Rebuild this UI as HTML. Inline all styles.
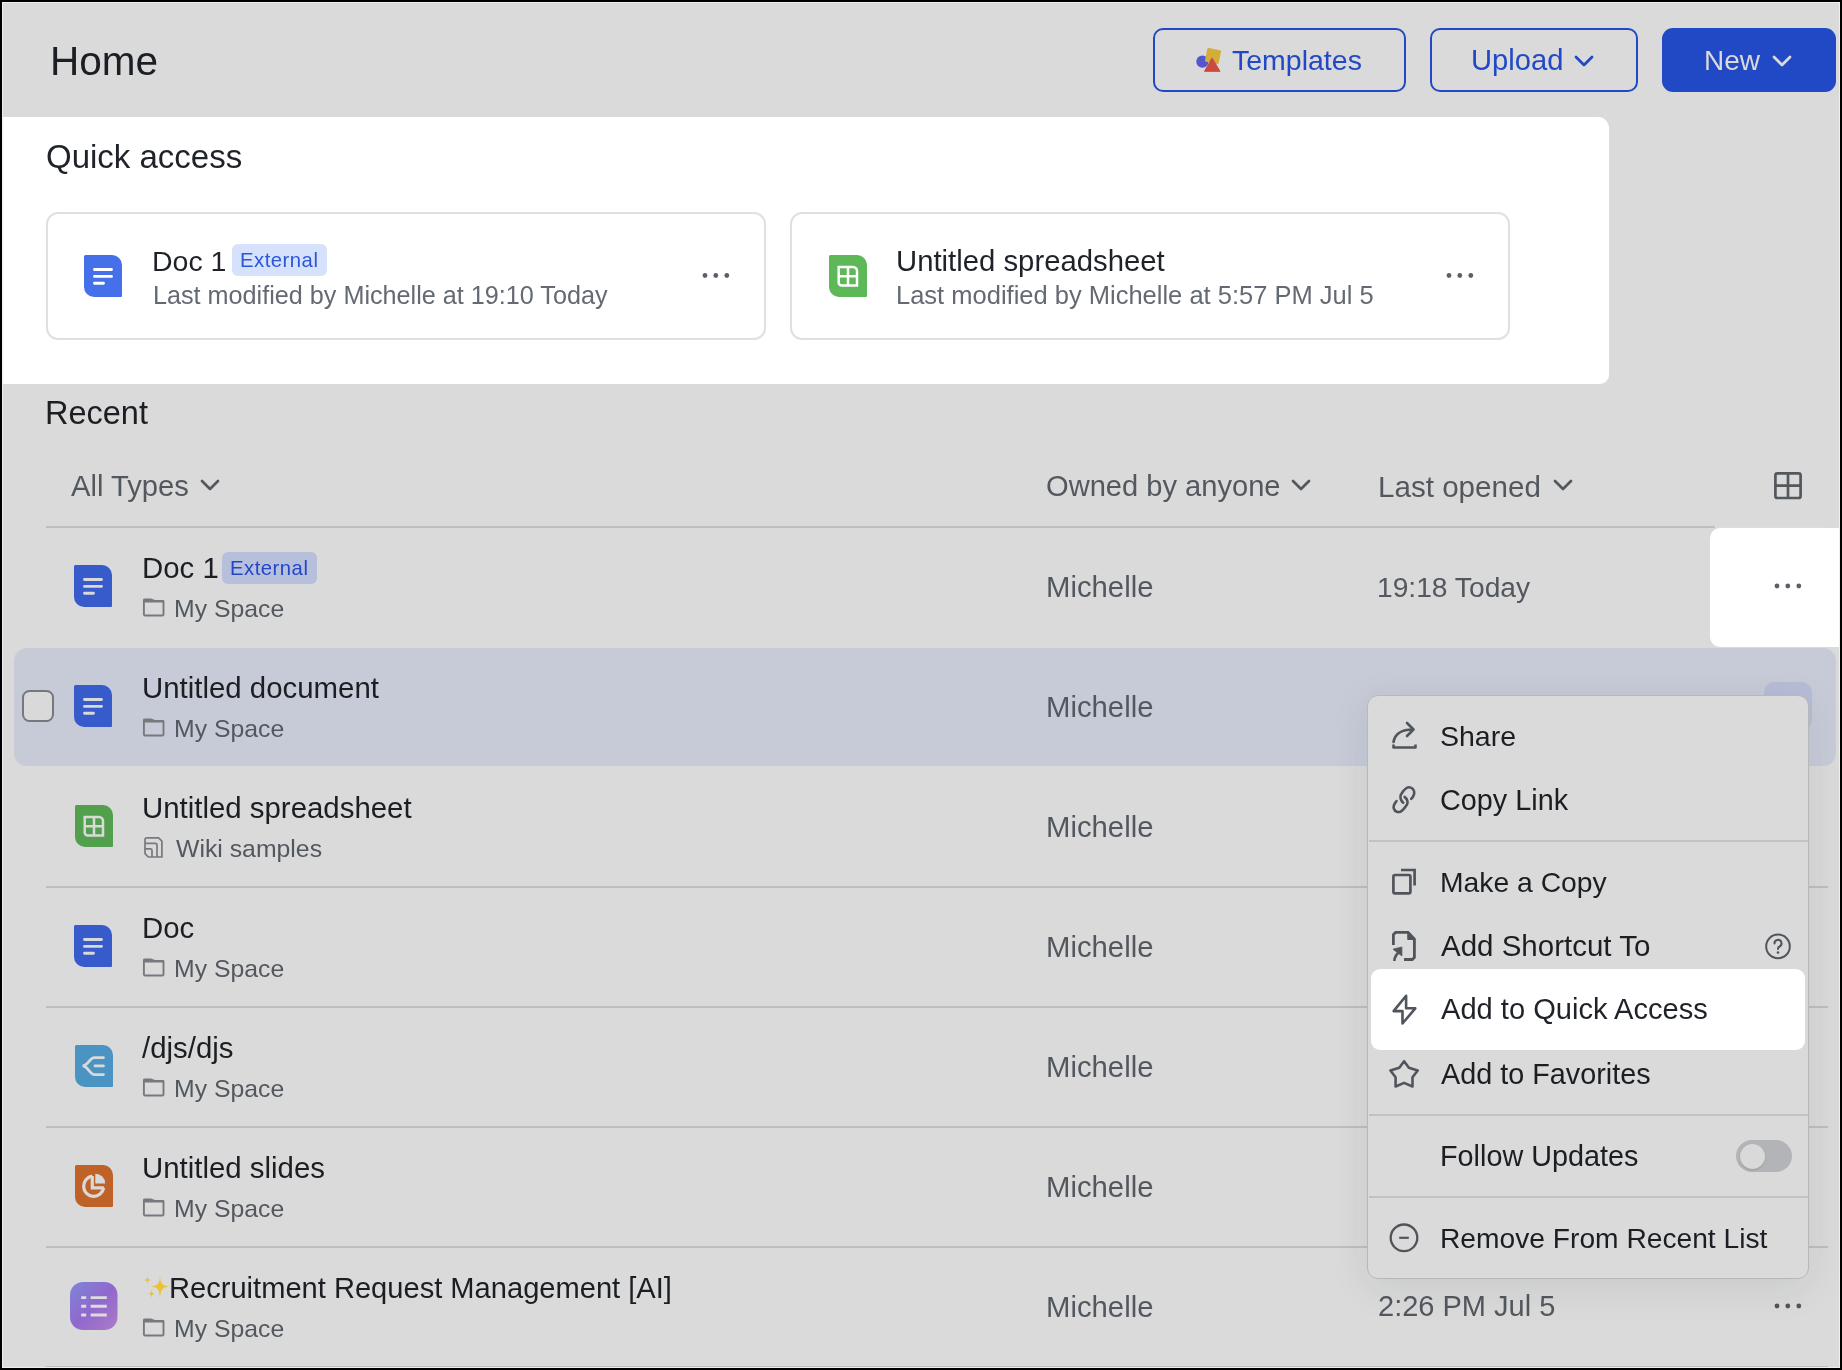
<!DOCTYPE html>
<html><head><meta charset="utf-8">
<style>
*{box-sizing:border-box;margin:0;padding:0}
html,body{width:1842px;height:1370px;overflow:hidden}
body{background:#dadada;font-family:"Liberation Sans",sans-serif;position:relative}
.a{position:absolute;white-space:nowrap;line-height:1;will-change:transform}
.box{position:absolute}
svg{overflow:visible}
</style></head><body>
<div class="a" style="left:49.98px;top:40.91px;font-size:40.5px;color:#1b1e22;">Home</div>
<div class="box" style="left:1153px;top:28px;width:253px;height:64px;border:2px solid #2249c5;border-radius:10px"></div>
<div class="box" style="left:1430px;top:28px;width:208px;height:64px;border:2px solid #2249c5;border-radius:10px"></div>
<div class="box" style="left:1662px;top:28px;width:174px;height:64px;background:#2249c5;border-radius:11px"></div>
<svg class="a" style="left:1190px;top:44px" width="36" height="32" viewBox="0 0 36 32">
<circle cx="12.4" cy="17.6" r="6.1" fill="#5256d0"/>
<rect x="16" y="5" width="14" height="14" rx="1.5" fill="#d4ac38" transform="rotate(12 23 12)"/>
<path d="M22 14 L30 27.3 H14.5 Z" fill="#c94a3f" stroke="#c94a3f" stroke-width="1" stroke-linejoin="round"/>
</svg>
<div class="a" style="left:1232.36px;top:46.07px;font-size:28.5px;color:#2249c5;">Templates</div>
<div class="a" style="left:1470.95px;top:45.68px;font-size:29.2px;color:#2249c5;">Upload</div>
<svg class="a" style="left:1570px;top:50px" width="28" height="22"><polyline points="6,7 14,15 22,7" fill="none" stroke="#2249c5" stroke-width="2.8" stroke-linecap="round" stroke-linejoin="round"/></svg>
<div class="a" style="left:1703.60px;top:46.59px;font-size:28px;color:#dadada;">New</div>
<svg class="a" style="left:1768px;top:50px" width="28" height="22"><polyline points="6,7 14,15 22,7" fill="none" stroke="#dadada" stroke-width="2.8" stroke-linecap="round" stroke-linejoin="round"/></svg>
<div class="box" style="left:0;top:117px;width:1609px;height:267px;background:#fff;border-radius:0 11px 9px 0"></div>
<div class="a" style="left:45.74px;top:139.86px;font-size:33px;color:#1f2329;">Quick access</div>
<div class="box" style="left:46px;top:212px;width:720px;height:128px;border:2px solid #dee0e3;border-radius:12px"></div>
<div class="box" style="left:790px;top:212px;width:720px;height:128px;border:2px solid #dee0e3;border-radius:12px"></div>
<svg class="a" style="left:84.3px;top:254.8px" width="38" height="42" viewBox="0 0 38 42">
<path d="M1.5 0 H28 A10 10 0 0 1 38 10 V41 A1 1 0 0 1 37 42 H10 A10 10 0 0 1 0 32 V1.5 A1.5 1.5 0 0 1 1.5 0 Z" fill="#4570ea"/>
<path d="M10.5 14.5 H27.5 M10.5 21.4 H27.5 M10.5 28.3 H19.5" stroke="#ffffff" stroke-width="2.9" stroke-linecap="round" fill="none"/>
</svg>
<div class="a" style="left:152.26px;top:246.57px;font-size:28.5px;color:#1f2329;">Doc 1</div>
<div class="box" style="left:232px;top:244.3px;width:95px;height:31.6px;background:#d6e1fb;border-radius:6px"></div>
<div class="a" style="left:239.93px;top:249.71px;font-size:20.3px;color:#2b56d8;letter-spacing:0.5px">External</div>
<div class="a" style="left:152.53px;top:282.76px;font-size:25.2px;color:#646a73;">Last modified by Michelle at 19:10 Today</div>
<svg class="a" style="left:698px;top:268px" width="36" height="14"><circle cx="7" cy="7.5" r="2.4" fill="#5b6068"/><circle cx="17.8" cy="7.5" r="2.4" fill="#5b6068"/><circle cx="28.8" cy="7.5" r="2.4" fill="#5b6068"/></svg>
<svg class="a" style="left:829.1px;top:254.9px" width="38" height="42" viewBox="0 0 38 42">
<path d="M1.5 0 H28 A10 10 0 0 1 38 10 V41 A1 1 0 0 1 37 42 H10 A10 10 0 0 1 0 32 V1.5 A1.5 1.5 0 0 1 1.5 0 Z" fill="#5db858"/>
<path d="M9.7 12 H24 A4 4 0 0 1 28 16 V30.4 H12.7 A3 3 0 0 1 9.7 27.4 Z M19 12 V30.4 M9.7 21.3 H28" stroke="#ffffff" stroke-width="2.5" fill="none"/>
</svg>
<div class="a" style="left:895.74px;top:246.09px;font-size:29.3px;color:#1f2329;">Untitled spreadsheet</div>
<div class="a" style="left:895.91px;top:282.51px;font-size:25.5px;color:#646a73;">Last modified by Michelle at 5:57 PM Jul 5</div>
<svg class="a" style="left:1442px;top:268px" width="36" height="14"><circle cx="7" cy="7.5" r="2.4" fill="#5b6068"/><circle cx="17.8" cy="7.5" r="2.4" fill="#5b6068"/><circle cx="28.8" cy="7.5" r="2.4" fill="#5b6068"/></svg>
<div class="a" style="left:44.63px;top:396.68px;font-size:32.5px;color:#1b1e22;">Recent</div>
<div class="a" style="left:70.94px;top:472.28px;font-size:29.2px;color:#53585f;">All Types</div>
<svg class="a" style="left:199px;top:478px" width="24" height="16"><polyline points="3,3 11,11 19,3" fill="none" stroke="#53585f" stroke-width="2.7" stroke-linecap="round" stroke-linejoin="round"/></svg>
<div class="a" style="left:1046.22px;top:472.16px;font-size:29.1px;color:#53585f;">Owned by anyone</div>
<svg class="a" style="left:1290px;top:478px" width="24" height="16"><polyline points="3,3 11,11 19,3" fill="none" stroke="#53585f" stroke-width="2.7" stroke-linecap="round" stroke-linejoin="round"/></svg>
<div class="a" style="left:1377.97px;top:471.74px;font-size:29.6px;color:#53585f;">Last opened</div>
<svg class="a" style="left:1551.5px;top:478px" width="24" height="16"><polyline points="3,3 11,11 19,3" fill="none" stroke="#53585f" stroke-width="2.7" stroke-linecap="round" stroke-linejoin="round"/></svg>
<svg class="a" style="left:1772px;top:469.5px" width="32" height="32" viewBox="0 0 32 32"><rect x="3.4" y="3.4" width="25.2" height="24.6" rx="2" fill="none" stroke="#53585f" stroke-width="2.7"/><path d="M16 3.5 V28 M3.5 15.7 H28.5" stroke="#53585f" stroke-width="2.7"/></svg>
<div class="box" style="left:46px;top:526px;width:1782px;height:1.5px;background:#bebebe"></div>
<div class="box" style="left:46px;top:886px;width:1782px;height:1.5px;background:#bebebe"></div>
<div class="box" style="left:46px;top:1006px;width:1782px;height:1.5px;background:#bebebe"></div>
<div class="box" style="left:46px;top:1126px;width:1782px;height:1.5px;background:#bebebe"></div>
<div class="box" style="left:46px;top:1246px;width:1782px;height:1.5px;background:#bebebe"></div>
<div class="box" style="left:46px;top:1366px;width:1782px;height:1.5px;background:#bebebe"></div>
<div class="box" style="left:1715px;top:525.5px;width:113px;height:2.5px;background:#dcdcdc"></div>
<div class="box" style="left:1710px;top:528px;width:140px;height:119px;background:#fff;border-radius:10px 0 0 10px"></div>
<div class="box" style="left:14px;top:647.5px;width:1822px;height:118.5px;background:#c7cbd8;border-radius:13px"></div>
<div class="box" style="left:1764px;top:682px;width:48px;height:48px;background:#b7bdd6;border-radius:10px"></div>
<div class="box" style="left:22.3px;top:690px;width:31.3px;height:31.7px;border:2.2px solid #75787d;background:#d9d9d9;border-radius:7.5px"></div>
<svg class="a" style="left:74.4px;top:565px" width="38" height="42" viewBox="0 0 38 42">
<path d="M1.5 0 H28 A10 10 0 0 1 38 10 V41 A1 1 0 0 1 37 42 H10 A10 10 0 0 1 0 32 V1.5 A1.5 1.5 0 0 1 1.5 0 Z" fill="#385bcc"/>
<path d="M10.5 14.5 H27.5 M10.5 21.4 H27.5 M10.5 28.3 H19.5" stroke="#d9d9d9" stroke-width="2.9" stroke-linecap="round" fill="none"/>
</svg>
<div class="a" style="left:142.09px;top:553.31px;font-size:29.4px;color:#1b1e22;">Doc 1</div>
<div class="box" style="left:221.9px;top:552.2px;width:95px;height:31.9px;background:#b6c0dc;border-radius:6px"></div>
<div class="a" style="left:230.13px;top:557.81px;font-size:20.3px;color:#2346c8;letter-spacing:0.5px">External</div>
<svg class="a" style="left:143.3px;top:598.1px" width="22" height="19" viewBox="0 0 22 19"><path d="M0.9 4 V16.4 A1.1 1.1 0 0 0 2 17.5 H19.4 A1.1 1.1 0 0 0 20.5 16.4 V4" fill="none" stroke="#77797e" stroke-width="1.9"/><path d="M0 4.4 V1.8 A1.5 1.5 0 0 1 1.5 0.4 H8 L12 2 H20 A1.4 1.4 0 0 1 21.4 3.4 V4.4 Z" fill="#77797e"/></svg>
<div class="a" style="left:173.97px;top:596.60px;font-size:24.8px;color:#53585f;">My Space</div>
<div class="a" style="left:1045.90px;top:571.79px;font-size:29.3px;color:#53585f;">Michelle</div>
<div class="a" style="left:1377.45px;top:572.72px;font-size:28.2px;color:#53585f;">19:18 Today</div>
<svg class="a" style="left:74.4px;top:685px" width="38" height="42" viewBox="0 0 38 42">
<path d="M1.5 0 H28 A10 10 0 0 1 38 10 V41 A1 1 0 0 1 37 42 H10 A10 10 0 0 1 0 32 V1.5 A1.5 1.5 0 0 1 1.5 0 Z" fill="#385bcc"/>
<path d="M10.5 14.5 H27.5 M10.5 21.4 H27.5 M10.5 28.3 H19.5" stroke="#d9d9d9" stroke-width="2.9" stroke-linecap="round" fill="none"/>
</svg>
<div class="a" style="left:142.23px;top:673.31px;font-size:29.4px;color:#1b1e22;">Untitled document</div>
<svg class="a" style="left:143.3px;top:718.1px" width="22" height="19" viewBox="0 0 22 19"><path d="M0.9 4 V16.4 A1.1 1.1 0 0 0 2 17.5 H19.4 A1.1 1.1 0 0 0 20.5 16.4 V4" fill="none" stroke="#77797e" stroke-width="1.9"/><path d="M0 4.4 V1.8 A1.5 1.5 0 0 1 1.5 0.4 H8 L12 2 H20 A1.4 1.4 0 0 1 21.4 3.4 V4.4 Z" fill="#77797e"/></svg>
<div class="a" style="left:173.97px;top:716.60px;font-size:24.8px;color:#53585f;">My Space</div>
<div class="a" style="left:1045.90px;top:691.79px;font-size:29.3px;color:#53585f;">Michelle</div>
<svg class="a" style="left:75.2px;top:805px" width="38" height="42" viewBox="0 0 38 42">
<path d="M1.5 0 H28 A10 10 0 0 1 38 10 V41 A1 1 0 0 1 37 42 H10 A10 10 0 0 1 0 32 V1.5 A1.5 1.5 0 0 1 1.5 0 Z" fill="#52a04d"/>
<path d="M9.7 12 H24 A4 4 0 0 1 28 16 V30.4 H12.7 A3 3 0 0 1 9.7 27.4 Z M19 12 V30.4 M9.7 21.3 H28" stroke="#d9d9d9" stroke-width="2.5" fill="none"/>
</svg>
<div class="a" style="left:142.23px;top:793.31px;font-size:29.4px;color:#1b1e22;">Untitled spreadsheet</div>
<svg class="a" style="left:142.5px;top:836.2px" width="22" height="22" viewBox="0 0 22 22"><path d="M2 3.7 A1.8 1.8 0 0 1 3.8 1.9 H15.6 L18.9 5.2 V21 H5.3 L2 17.7 Z" fill="none" stroke="#77797e" stroke-width="1.7" stroke-linejoin="round"/><path d="M2 7.4 H12.4 A1.6 1.6 0 0 1 14 9 V21 M2 12.9 H7.4 A1.6 1.6 0 0 1 9 14.5 V21" fill="none" stroke="#77797e" stroke-width="1.7"/></svg>
<div class="a" style="left:175.89px;top:836.60px;font-size:24.8px;color:#53585f;">Wiki samples</div>
<div class="a" style="left:1045.90px;top:811.79px;font-size:29.3px;color:#53585f;">Michelle</div>
<svg class="a" style="left:74.4px;top:925px" width="38" height="42" viewBox="0 0 38 42">
<path d="M1.5 0 H28 A10 10 0 0 1 38 10 V41 A1 1 0 0 1 37 42 H10 A10 10 0 0 1 0 32 V1.5 A1.5 1.5 0 0 1 1.5 0 Z" fill="#385bcc"/>
<path d="M10.5 14.5 H27.5 M10.5 21.4 H27.5 M10.5 28.3 H19.5" stroke="#d9d9d9" stroke-width="2.9" stroke-linecap="round" fill="none"/>
</svg>
<div class="a" style="left:142.09px;top:913.31px;font-size:29.4px;color:#1b1e22;">Doc</div>
<svg class="a" style="left:143.3px;top:958.1px" width="22" height="19" viewBox="0 0 22 19"><path d="M0.9 4 V16.4 A1.1 1.1 0 0 0 2 17.5 H19.4 A1.1 1.1 0 0 0 20.5 16.4 V4" fill="none" stroke="#77797e" stroke-width="1.9"/><path d="M0 4.4 V1.8 A1.5 1.5 0 0 1 1.5 0.4 H8 L12 2 H20 A1.4 1.4 0 0 1 21.4 3.4 V4.4 Z" fill="#77797e"/></svg>
<div class="a" style="left:173.97px;top:956.60px;font-size:24.8px;color:#53585f;">My Space</div>
<div class="a" style="left:1045.90px;top:931.79px;font-size:29.3px;color:#53585f;">Michelle</div>
<svg class="a" style="left:75.2px;top:1045px" width="38" height="42" viewBox="0 0 38 42">
<path d="M1.5 0 H28 A10 10 0 0 1 38 10 V41 A1 1 0 0 1 37 42 H10 A10 10 0 0 1 0 32 V1.5 A1.5 1.5 0 0 1 1.5 0 Z" fill="#4a94c4"/>
<path d="M28.5 12.7 H19.5 C14.5 12.7 13 20.9 7.5 20.9 C13 20.9 14.5 29.6 19.5 29.6 H28.5 M20 20.9 H28.5" stroke="#d9d9d9" stroke-width="2.7" stroke-linecap="round" fill="none"/>
</svg>
<div class="a" style="left:141.50px;top:1033.31px;font-size:29.4px;color:#1b1e22;">/djs/djs</div>
<svg class="a" style="left:143.3px;top:1078.1px" width="22" height="19" viewBox="0 0 22 19"><path d="M0.9 4 V16.4 A1.1 1.1 0 0 0 2 17.5 H19.4 A1.1 1.1 0 0 0 20.5 16.4 V4" fill="none" stroke="#77797e" stroke-width="1.9"/><path d="M0 4.4 V1.8 A1.5 1.5 0 0 1 1.5 0.4 H8 L12 2 H20 A1.4 1.4 0 0 1 21.4 3.4 V4.4 Z" fill="#77797e"/></svg>
<div class="a" style="left:173.97px;top:1076.60px;font-size:24.8px;color:#53585f;">My Space</div>
<div class="a" style="left:1045.90px;top:1051.79px;font-size:29.3px;color:#53585f;">Michelle</div>
<svg class="a" style="left:75.2px;top:1165px" width="38" height="42" viewBox="0 0 38 42">
<path d="M1.5 0 H28 A10 10 0 0 1 38 10 V41 A1 1 0 0 1 37 42 H10 A10 10 0 0 1 0 32 V1.5 A1.5 1.5 0 0 1 1.5 0 Z" fill="#be6228"/>
<path d="M17.3 11.2 A10.1 10.1 0 1 0 28.7 22.8" stroke="#d9d9d9" stroke-width="3.2" fill="none"/>
<path d="M17.3 11 V22.8 H28.9" stroke="#d9d9d9" stroke-width="3.2" fill="none"/>
<path d="M20.3 18.6 V8.7 A9.9 9.9 0 0 1 30.2 18.6 Z" fill="#d9d9d9"/>
</svg>
<div class="a" style="left:142.23px;top:1153.31px;font-size:29.4px;color:#1b1e22;">Untitled slides</div>
<svg class="a" style="left:143.3px;top:1198.1px" width="22" height="19" viewBox="0 0 22 19"><path d="M0.9 4 V16.4 A1.1 1.1 0 0 0 2 17.5 H19.4 A1.1 1.1 0 0 0 20.5 16.4 V4" fill="none" stroke="#77797e" stroke-width="1.9"/><path d="M0 4.4 V1.8 A1.5 1.5 0 0 1 1.5 0.4 H8 L12 2 H20 A1.4 1.4 0 0 1 21.4 3.4 V4.4 Z" fill="#77797e"/></svg>
<div class="a" style="left:173.97px;top:1196.60px;font-size:24.8px;color:#53585f;">My Space</div>
<div class="a" style="left:1045.90px;top:1171.79px;font-size:29.3px;color:#53585f;">Michelle</div>
<svg class="a" style="left:70.3px;top:1282px" width="48" height="48" viewBox="0 0 48 48">
<defs><linearGradient id="bg" x1="0" y1="0" x2="1" y2="1"><stop offset="0" stop-color="#7d86d6"/><stop offset="0.5" stop-color="#9068cd"/><stop offset="1" stop-color="#ad7cc6"/></linearGradient></defs>
<rect x="0" y="0" width="47.5" height="48" rx="13" fill="url(#bg)"/>
<path d="M11.2 15.6 H16.2 M11.2 24.3 H16.2 M11.2 33 H16.2 M20.6 15.6 H36.8 M20.6 24.3 H36.8 M20.6 33 H36.8" stroke="#dcdcdc" stroke-width="2.9" stroke-linecap="butt"/>
</svg>
<svg class="a" style="left:143.5px;top:1275.2px" width="27" height="27" viewBox="0 0 27 27">
<path d="M16 1 C16.6 8.5 18 10.5 25 11.5 C18 12.5 16.6 14.5 16 24 C15.4 14.5 14 12.5 7 11.5 C14 10.5 15.4 8.5 16 1 Z" fill="#e8c33a"/>
<path d="M3.5 0.5 C3.8 3.8 4.3 4.3 7 5 C4.3 5.7 3.8 6.2 3.5 9.5 C3.2 6.2 2.7 5.7 0 5 C2.7 4.3 3.2 3.8 3.5 0.5 Z" fill="#e8c33a"/>
<path d="M7.5 14.5 C7.8 17.5 8.3 18 11 18.7 C8.3 19.4 7.8 19.9 7.5 23 C7.2 19.9 6.7 19.4 4 18.7 C6.7 18 7.2 17.5 7.5 14.5 Z" fill="#e8c33a"/>
</svg>
<div class="a" style="left:169.41px;top:1273.56px;font-size:29.1px;color:#1b1e22;">Recruitment Request Management [AI]</div>
<svg class="a" style="left:143.3px;top:1318.1px" width="22" height="19" viewBox="0 0 22 19"><path d="M0.9 4 V16.4 A1.1 1.1 0 0 0 2 17.5 H19.4 A1.1 1.1 0 0 0 20.5 16.4 V4" fill="none" stroke="#77797e" stroke-width="1.9"/><path d="M0 4.4 V1.8 A1.5 1.5 0 0 1 1.5 0.4 H8 L12 2 H20 A1.4 1.4 0 0 1 21.4 3.4 V4.4 Z" fill="#77797e"/></svg>
<div class="a" style="left:173.97px;top:1316.60px;font-size:24.8px;color:#53585f;">My Space</div>
<div class="a" style="left:1045.90px;top:1291.79px;font-size:29.3px;color:#53585f;">Michelle</div>
<div class="a" style="left:1378.14px;top:1292.05px;font-size:29px;color:#53585f;">2:26 PM Jul 5</div>
<svg class="a" style="left:1770px;top:578.6px" width="36" height="14"><circle cx="7" cy="7" r="2.4" fill="#5b6068"/><circle cx="17.8" cy="7" r="2.4" fill="#5b6068"/><circle cx="28.8" cy="7" r="2.4" fill="#5b6068"/></svg>
<svg class="a" style="left:1770px;top:1298.6px" width="36" height="14"><circle cx="7" cy="7" r="2.4" fill="#50555c"/><circle cx="17.8" cy="7" r="2.4" fill="#50555c"/><circle cx="28.8" cy="7" r="2.4" fill="#50555c"/></svg>
<div class="box" style="left:1366.5px;top:695px;width:442.5px;height:584px;background:#dadada;border:1.6px solid #b8b8b8;border-radius:11px;box-shadow:0 8px 40px rgba(20,30,50,0.09)"></div>
<div class="box" style="left:1369px;top:840px;width:439px;height:2px;background:#c2c2c2"></div>
<div class="box" style="left:1369px;top:1114px;width:439px;height:2px;background:#c2c2c2"></div>
<div class="box" style="left:1369px;top:1196px;width:439px;height:2px;background:#c2c2c2"></div>
<div class="box" style="left:1370.5px;top:969px;width:434px;height:81px;background:#fff;border-radius:9px"></div>
<div class="a" style="left:1439.91px;top:722.07px;font-size:28.5px;color:#1b1e22;">Share</div>
<div class="a" style="left:1439.74px;top:785.52px;font-size:28.8px;color:#1b1e22;">Copy Link</div>
<div class="a" style="left:1439.88px;top:868.24px;font-size:28.3px;color:#1b1e22;">Make a Copy</div>
<div class="a" style="left:1440.64px;top:931.12px;font-size:29.5px;color:#1b1e22;">Add Shortcut To</div>
<div class="a" style="left:1440.64px;top:994.96px;font-size:29.1px;color:#1f2329;">Add to Quick Access</div>
<div class="a" style="left:1440.64px;top:1059.52px;font-size:28.8px;color:#1b1e22;">Add to Favorites</div>
<div class="a" style="left:1439.84px;top:1141.52px;font-size:28.8px;color:#1b1e22;">Follow Updates</div>
<div class="a" style="left:1439.89px;top:1223.82px;font-size:28.2px;color:#1b1e22;">Remove From Recent List</div>
<svg class="a" style="left:1388px;top:718px" width="32" height="34" viewBox="0 0 32 34">
<path d="M5.5 24 C7 15.5 13 11.5 25 11.5" fill="none" stroke="#50555c" stroke-width="2.6" stroke-linecap="round"/>
<path d="M19 5 L25.5 11.5 L19 18" fill="none" stroke="#50555c" stroke-width="2.6" stroke-linecap="round" stroke-linejoin="round"/>
<path d="M5.5 26.5 V29.5 H27.5 V26.5" fill="none" stroke="#50555c" stroke-width="2.6" stroke-linejoin="round"/>
</svg>
<svg class="a" style="left:1388px;top:783px" width="32" height="34" viewBox="0 0 32 34">
<path d="M23.2 15.9 C25.5 13.5 27 11.5 26 8 C25 4.5 21 3.5 18.5 5 C16.5 6.2 14 9.5 12.8 11.8 C11.8 13.8 12.5 17.5 15.2 19.7" fill="none" stroke="#50555c" stroke-width="2.6" stroke-linecap="round"/>
<path d="M8.5 18.1 C6.5 20.5 5 23 5.8 25.5 C6.8 28.8 10.5 29.8 13 28.3 C15 27.2 17.5 23.8 19 21.5 C20.2 19.5 19.5 16 16.6 13.9" fill="none" stroke="#50555c" stroke-width="2.6" stroke-linecap="round"/>
</svg>
<svg class="a" style="left:1388px;top:865px" width="32" height="34" viewBox="0 0 32 34">
<rect x="5.4" y="10" width="17" height="18.3" rx="1.6" fill="none" stroke="#50555c" stroke-width="2.7"/>
<path d="M13 5 H26.6 V20.5" fill="none" stroke="#50555c" stroke-width="2.7"/>
</svg>
<svg class="a" style="left:1388px;top:929px" width="32" height="34" viewBox="0 0 32 34">
<path d="M5.4 16 V5.6 L7.6 3.4 H20 L26.4 10 V28.4 L24.3 30.5 H16" fill="none" stroke="#50555c" stroke-width="2.8" stroke-linejoin="miter"/>
<path d="M20 3.4 V10.2 H26.4 Z" fill="#50555c" stroke="#50555c" stroke-width="1.6" stroke-linejoin="round"/>
<path d="M6.3 32 Q6.8 25.8 11.5 22.8" fill="none" stroke="#50555c" stroke-width="2.6"/>
<path d="M5 20.2 L13.9 18 L13.9 26.9 Z" fill="#50555c" stroke="#50555c" stroke-width="0.8" stroke-linejoin="round"/>
</svg>
<svg class="a" style="left:1388px;top:991px" width="32" height="36" viewBox="0 0 32 36">
<path d="M18.1 4.8 L5.6 20.1 H14.5 V32.5 L27.3 17.3 H18.1 Z" fill="none" stroke="#50555c" stroke-width="2.6" stroke-linejoin="round"/>
</svg>
<svg class="a" style="left:1386px;top:1056px" width="36" height="36" viewBox="0 0 36 36">
<path d="M18.1 5.2 L22.9 11.7 L31.7 14.5 L26.5 21.3 L26.5 30.5 L18.1 26.9 L9.6 30.5 L9.6 21.3 L4.4 14.5 L13.3 11.7 Z" fill="none" stroke="#50555c" stroke-width="2.6" stroke-linejoin="round"/>
</svg>
<svg class="a" style="left:1386px;top:1220px" width="36" height="36" viewBox="0 0 36 36">
<circle cx="18" cy="17.8" r="13.3" fill="none" stroke="#50555c" stroke-width="2.3"/>
<path d="M13.2 17.8 H22.8" stroke="#50555c" stroke-width="2.2"/>
</svg>
<svg class="a" style="left:1762px;top:931px" width="32" height="32" viewBox="0 0 32 32">
<circle cx="16" cy="15.4" r="11.8" fill="none" stroke="#50555c" stroke-width="2"/>
<path d="M12.5 12.5 A3.5 3.5 0 1 1 17.5 15.5 C16.3 16.1 16 16.8 16 18" fill="none" stroke="#50555c" stroke-width="2" stroke-linecap="round"/>
<circle cx="16" cy="21.5" r="1.3" fill="#50555c"/>
</svg>
<div class="box" style="left:1736px;top:1140px;width:56px;height:32px;background:#b3b4b7;border-radius:16px"></div>
<div class="box" style="left:1739.5px;top:1143.5px;width:25px;height:25px;background:#d9d9d9;border-radius:50%;box-shadow:0 1px 2px rgba(0,0,0,0.15)"></div>
<div class="box" style="left:0;top:0;width:1842px;height:2px;background:#000"></div>
<div class="box" style="left:0;top:1368px;width:1842px;height:2px;background:#000"></div>
<div class="box" style="left:0;top:0;width:2px;height:1370px;background:#000"></div>
<div class="box" style="left:1840px;top:0;width:2px;height:1370px;background:#000"></div>
<div class="box" style="left:2px;top:2px;width:1838px;height:1px;background:#eeeeee"></div>
<div class="box" style="left:2px;top:1367px;width:1838px;height:1px;background:#eeeeee"></div>
<div class="box" style="left:2px;top:2px;width:1px;height:1366px;background:#eeeeee"></div>
<div class="box" style="left:1839px;top:2px;width:1px;height:1366px;background:#eeeeee"></div>
</body></html>
